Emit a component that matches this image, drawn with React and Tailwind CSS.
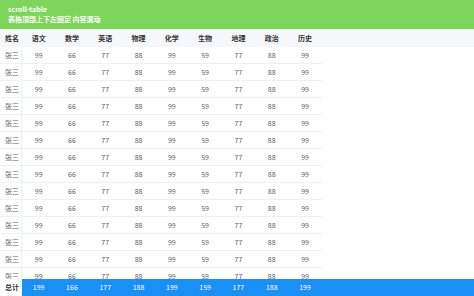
import React from 'react';

const subjects = ['语文', '数学', '英语', '物理', '化学', '生物', '地理', '政治', '历史'];
const scores = [99, 66, 77, 88, 99, 59, 77, 88, 99];
const totals = [199, 166, 177, 188, 199, 159, 177, 188, 199];
const rows = Array.from({ length: 14 }, () => ({ name: '张三', scores }));

const font = { fontFamily: '"Noto Sans CJK SC", "Noto Sans", sans-serif' };

export default function App() {
  return (
    <div className="w-[474px] h-[296px] flex flex-col overflow-hidden bg-white" style={font}>
      {/* top bar */}
      <div className="h-[29px] bg-[#7ed55b] px-[8px] pt-[4px] text-white shrink-0">
        <div className="text-[7px] font-bold leading-[10px]">scroll-table</div>
        <div className="text-[7px] font-bold leading-[10px]">表格顶部上下左固定 内容滚动</div>
      </div>

      {/* header row */}
      <div className="h-[18px] bg-[#f5f7fa] flex items-center shrink-0 text-[7px] font-bold text-[#333]">
        <div className="w-[22px] pl-[5px] shrink-0">姓名</div>
        {subjects.map((s) => (
          <div key={s} className="w-[33.3px] text-center shrink-0">{s}</div>
        ))}
      </div>

      {/* body */}
      <div className="flex-1 overflow-hidden">
        {rows.map((r, i) => (
          <div key={i} className="h-[17px] w-[322px] flex items-center border-b border-[#eef0f3] text-[7px] text-[#606266]">
            <div className="w-[22px] h-full flex items-center pl-[5px] shrink-0 border-r border-[#eef0f3]">{r.name}</div>
            {r.scores.map((v, j) => (
              <div key={j} className="w-[33.3px] text-center shrink-0">{v}</div>
            ))}
          </div>
        ))}
      </div>

      {/* footer */}
      <div className="h-[17px] flex items-center shrink-0 text-[7px]">
        <div className="w-[22px] h-full flex items-center pl-[5px] shrink-0 font-bold text-[#333] bg-white">总计</div>
        <div className="flex-1 h-full flex items-center bg-[#1a8ff5] text-white">
          {totals.map((v, j) => (
            <div key={j} className="w-[33.3px] text-center shrink-0">{v}</div>
          ))}
        </div>
      </div>
    </div>
  );
}
